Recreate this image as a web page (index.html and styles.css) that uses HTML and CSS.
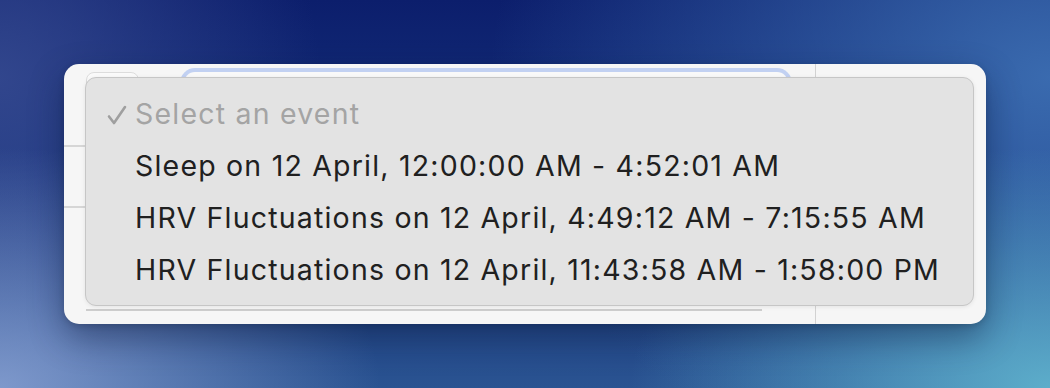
FILE: index.html
```html
<!DOCTYPE html>
<html>
<head>
<meta charset="utf-8">
<link rel="stylesheet" href="styles.css">
</head>
<body>
<div class="window">
  <div class="main">
    <div class="toolbar">
      <div class="btn"></div>
      <div class="field"></div>
    </div>
    <div class="rows">
      <div class="row"></div>
      <div class="row"></div>
    </div>
    <div class="footer-line"></div>
  </div>
  <div class="divider"></div>
  <div class="side"></div>

  <ul class="menu">
    <li class="item placeholder"><svg class="check" width="22" height="22" viewBox="0 0 22 22"><path d="M3 12.5 L8 19 L19 3" fill="none" stroke="#9f9f9f" stroke-width="2.6" stroke-linecap="round" stroke-linejoin="round"/></svg>Select an event</li>
    <li class="item">Sleep on 12 April, 12:00:00 AM - 4:52:01 AM</li>
    <li class="item">HRV Fluctuations on 12 April, 4:49:12 AM - 7:15:55 AM</li>
    <li class="item">HRV Fluctuations on 12 April, 11:43:58 AM - 1:58:00 PM</li>
  </ul>
</div>
</body>
</html>
```
FILE: styles.css
```css
html, body {
  margin: 0;
  padding: 0;
}
body {
  width: 1050px;
  height: 388px;
  overflow: hidden;
  background:
    radial-gradient(ellipse 380px 240px at 0% 100%, rgba(135,160,210,0.9), rgba(135,160,210,0) 100%),
    radial-gradient(ellipse 420px 240px at 100% 100%, rgba(95,178,205,0.95), rgba(95,178,205,0) 100%),
    radial-gradient(ellipse 560px 420px at 100% 20%, rgba(60,110,178,0.95), rgba(60,110,178,0) 100%),
    radial-gradient(ellipse 320px 320px at 0% 20%, rgba(55,75,145,0.85), rgba(55,75,145,0) 100%),
    linear-gradient(180deg, #0c1e6c 0%, #17357f 45%, #2a5391 100%);
  font-family: Inter, "Liberation Sans", sans-serif;
  padding-top: 64px;
  box-sizing: border-box;
}
.window {
  position: relative;
  margin-left: 64px;
  width: 922px;
  height: 260px;
  border-radius: 15px;
  background: #f6f6f6;
  box-shadow: 0 14px 34px rgba(10, 25, 60, 0.45), 0 2px 6px rgba(0,0,0,0.15);
  display: flex;
  overflow: hidden;
}
.main {
  width: 751px;
  display: flex;
  flex-direction: column;
}
.toolbar {
  display: flex;
  align-items: flex-start;
  gap: 45px;
  padding: 6px 0 0 22px;
  height: 16px;
}
.btn {
  width: 51px;
  height: 30px;
  border-radius: 8px;
  border: 1px solid #dcdcdc;
  background: #fafafa;
  margin-top: 2px;
}
.field {
  width: 604px;
  height: 30px;
  border-radius: 11px;
  background: #f9f9f9;
  box-shadow: 0 0 0 4px #c2d1f2;
  margin-top: 2px;
}
.rows {
  display: flex;
  flex-direction: column;
  margin-top: 59px;
}
.row {
  height: 59px;
  border-top: 2px solid #d6d6d6;
  width: 22px;
}
.footer-line {
  margin-left: 22px;
  width: 676px;
  height: 2px;
  background: #cdcdcd;
  margin-top: 42px;
}
.divider {
  width: 1px;
  background: #d2d2d2;
}
.side {
  flex: 1;
}
.menu {
  position: absolute;
  left: 21px;
  top: 13px;
  width: 889px;
  height: 229px;
  margin: 0;
  padding: 10px 0;
  box-sizing: border-box;
  list-style: none;
  background: #e3e3e3;
  border: 1px solid #c6c6c6;
  border-radius: 11px;
  box-shadow: 0 1px 4px rgba(0,0,0,0.08);
}
.item {
  height: 52px;
  line-height: 52px;
  padding-left: 49px;
  position: relative;
  font-size: 28.5px;
  letter-spacing: 1.2px;
  color: #202020;
  white-space: nowrap;
}
.placeholder {
  color: #a4a4a4;
}
.check {
  position: absolute;
  left: 20px;
  top: 16px;
}
```
